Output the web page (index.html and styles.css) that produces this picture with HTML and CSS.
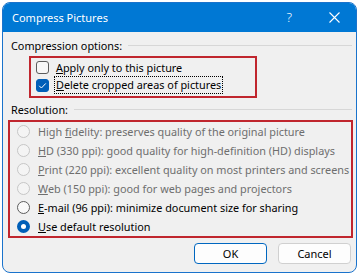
FILE: index.html
```html
<!DOCTYPE html>
<html lang="en">
<head>
<meta charset="utf-8">
<title>Compress Pictures</title>
<link rel="stylesheet" href="styles.css">
</head>
<body>
<div class="dialog">
  <div class="titlebar">
    <span class="title">Compress Pictures</span>
    <span class="help">?</span>
    <svg class="close" width="11" height="11" viewBox="0 0 11 11"><path d="M0.5 0.5 L10.5 10.5 M10.5 0.5 L0.5 10.5" stroke="#fff" stroke-width="1.1" fill="none"/></svg>
  </div>
  <div class="content">
    <div class="group-head"><span class="label">Compression options:</span><span class="rule"></span></div>
    <div class="box box-options">
      <div class="row check-row">
        <span class="checkbox"></span>
        <span class="text"><u>A</u>pply only to this picture</span>
      </div>
      <div class="row check-row">
        <span class="checkbox checked"><svg width="13" height="13" viewBox="0 0 13 13"><path d="M3.2 6.8 L5.4 9 L9.8 4.4" stroke="#fff" stroke-width="1" fill="none"/></svg></span>
        <span class="text focus"><u>D</u>elete cropped areas of pictures</span>
      </div>
    </div>
    <div class="group-head head-res"><span class="label">Resolution:</span><span class="rule"></span></div>
    <div class="box box-res">
      <div class="row radio-row disabled"><span class="radio"></span><span class="text">High <u>f</u>idelity: preserves quality of the original picture</span></div>
      <div class="row radio-row disabled"><span class="radio"></span><span class="text"><u>H</u>D (330 ppi): good quality for high-definition (HD) displays</span></div>
      <div class="row radio-row disabled"><span class="radio"></span><span class="text"><u>P</u>rint (220 ppi): excellent quality on most printers and screens</span></div>
      <div class="row radio-row disabled"><span class="radio"></span><span class="text"><u>W</u>eb (150 ppi): good for web pages and projectors</span></div>
      <div class="row radio-row"><span class="radio"></span><span class="text"><u>E</u>-mail (96 ppi): minimize document size for sharing</span></div>
      <div class="row radio-row"><span class="radio selected"></span><span class="text"><u>U</u>se default resolution</span></div>
    </div>
    <div class="buttons">
      <button class="btn btn-default">OK</button>
      <button class="btn">Cancel</button>
    </div>
  </div>
</div>
</body>
</html>
```
FILE: styles.css
```css
* { box-sizing: border-box; }
html, body { margin: 0; padding: 0; }
body {
  width: 360px;
  height: 275px;
  overflow: hidden;
  background: #ffffff;
  font-family: "Noto Sans", "Open Sans", sans-serif;
  font-size: 10.85px;
  color: #000;
}
.dialog {
  width: 355px;
  height: 271px;
  margin: 2px 0 0 2px;
  border: 1px solid #1a73cc;
  border-radius: 8px;
  overflow: hidden;
  background: #f0f0f0;
  display: flex;
  flex-direction: column;
}
.titlebar {
  height: 29px;
  flex: none;
  background: #0078d4;
  color: #fff;
  display: flex;
  align-items: center;
  padding-left: 9px;
}
.title { font-size: 11px; flex: 1; padding-bottom: 1px; }
.help { font-size: 13px; font-weight: 300; margin-right: 37px; padding-bottom: 1px; }
.close { margin-right: 16px; }
.content {
  flex: 1;
  display: flex;
  flex-direction: column;
  padding: 6px 3px 0 5px;
}
.group-head {
  height: 16px;
  display: flex;
  align-items: center;
  padding-left: 3px;
  line-height: 16px;
}
.group-head .rule {
  flex: 1;
  height: 1px;
  background: #d7d7d7;
  margin-left: 6px;
  margin-right: 1px;
  margin-bottom: 1px;
}
.head-res { margin-top: 4px; }
.box {
  border: 2px solid #c0262e;
  margin-top: 2px;
}
.box-options {
  width: 228px;
  margin-left: 21px;
  height: 42px;
  padding: 0 0 2px 5px;
}
.row { display: flex; align-items: center; white-space: nowrap; }
.check-row { height: 18px; }
.checkbox {
  width: 13px;
  height: 13px;
  border: 1px solid #5c5c5c;
  border-radius: 3px;
  background: #f7f7f7;
  margin-right: 7px;
  flex: none;
  display: flex;
}
.checkbox.checked {
  background: #005fb8;
  border-color: #005fb8;
}
.checkbox.checked svg { margin: -1px; }
.focus {
  outline: 1px dotted #000;
  outline-offset: 0;
  padding: 0 1px;
  margin-left: -1px;
  line-height: 16px;
}
.box-res {
  padding: 0 0 0 7px;
}
.radio-row { height: 19px; }
.radio {
  width: 13px;
  height: 13px;
  border: 1px solid #5c5c5c;
  border-radius: 50%;
  background: #f9f9f9;
  margin-right: 8px;
  flex: none;
}
.disabled .radio {
  border-color: #c6c6c6;
  background: #f4f4f4;
}
.disabled .text { color: #6e6e6e; }
.radio.selected {
  background: #005fb8;
  border: 4px solid #005fb8;
  position: relative;
}
.radio.selected::after {
  content: "";
  position: absolute;
  left: 0;
  top: 0;
  width: 5px;
  height: 5px;
  border-radius: 50%;
  background: #fff;
}
.buttons {
  display: flex;
  justify-content: flex-end;
  gap: 11px;
  margin-top: 5px;
  padding-right: 2px;
}
.btn {
  width: 73px;
  height: 21px;
  font-family: inherit;
  font-size: 11px;
  color: #000;
  background: #fdfdfd;
  border: 1px solid #d0d0d0;
  border-radius: 4px;
  padding: 0;
}
.btn-default { border-color: #0067c0; }
```
